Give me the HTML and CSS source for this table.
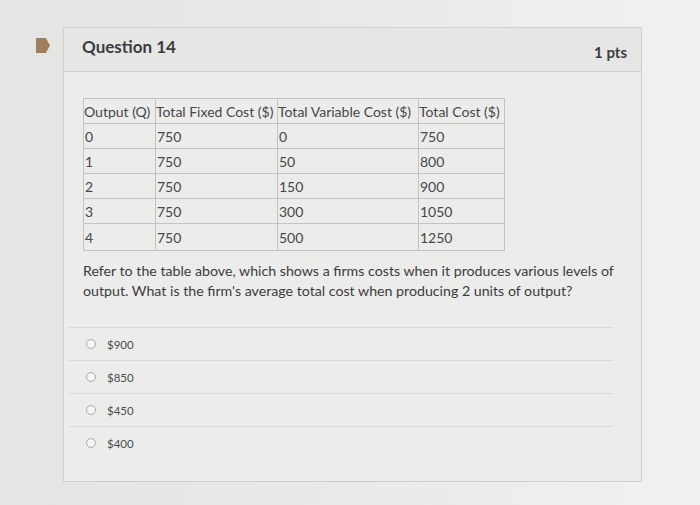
FILE: index.html
```html
<!DOCTYPE html>
<html>
<head>
<meta charset="utf-8">
<link rel="stylesheet" href="styles.css">
</head>
<body>
<div class="page">
  <div class="flag"></div>
  <div class="card">
    <div class="card-header">
      <h2 class="qtitle">Question 14</h2>
      <span class="pts">1 pts</span>
    </div>
    <div class="card-body">
      <table class="costs">
        <tr><th>Output (Q)</th><th>Total Fixed Cost ($)</th><th>Total Variable Cost ($)</th><th>Total Cost ($)</th></tr>
        <tr><td>0</td><td>750</td><td>0</td><td>750</td></tr>
        <tr><td>1</td><td>750</td><td>50</td><td>800</td></tr>
        <tr><td>2</td><td>750</td><td>150</td><td>900</td></tr>
        <tr><td>3</td><td>750</td><td>300</td><td>1050</td></tr>
        <tr class="last"><td>4</td><td>750</td><td>500</td><td>1250</td></tr>
      </table>
      <p class="prompt">Refer to the table above, which shows a firms costs when it produces various levels of output. What is the firm's average total cost when producing 2 units of output?</p>
      <div class="answers">
        <div class="answer"><span class="radio"></span><span class="label">$900</span></div>
        <div class="answer"><span class="radio"></span><span class="label">$850</span></div>
        <div class="answer"><span class="radio"></span><span class="label">$450</span></div>
        <div class="answer"><span class="radio"></span><span class="label">$400</span></div>
      </div>
    </div>
  </div>
</div>
</body>
</html>
```
FILE: styles.css
```css
html, body {
  margin: 0;
  padding: 0;
}
body {
  width: 700px;
  height: 505px;
  overflow: hidden;
  background: linear-gradient(90deg, #e4e4e2 0%, #ebebe9 60%, #f1f1ef 100%);
  font-family: Lato, "Liberation Sans", sans-serif;
  color: #3a3c40;
}
.page {
  display: flex;
  align-items: flex-start;
  padding: 27px 0 0 36px;
}
.flag {
  width: 14px;
  height: 15px;
  margin-top: 11px;
  margin-right: 13px;
  background: #9f7f5c;
  clip-path: polygon(0 0, 70% 0, 100% 50%, 70% 100%, 0 100%);
}
.card {
  width: 579px;
  height: 455px;
  border: 1px solid #cfcfcd;
  background: #ececea;
  box-sizing: border-box;
}
.card-header {
  height: 43px;
  display: flex;
  justify-content: space-between;
  align-items: center;
  padding: 0 14px 0 18px;
  background: #e6e6e4;
  border-bottom: 1px solid #cdcdcb;
}
.qtitle {
  margin: 0;
  font-size: 17px;
  font-weight: 700;
  color: #3b3d42;
  margin-top: -7px;
}
.pts {
  font-size: 15px;
  font-weight: 700;
  color: #3b3d42;
  margin-top: 4px;
}
.card-body {
  padding: 26px 20px 0 19px;
}
.costs {
  border-collapse: collapse;
  font-size: 14px;
  color: #45474b;
  border: 1px solid #c3c3c1;
}
.costs th, .costs td {
  border: 1px solid #c3c3c1;
  padding: 0 2px 0 1px;
  text-align: left;
  font-weight: 400;
  height: 24px;
  white-space: nowrap;
}
.costs th { padding-left: 0; }
.costs td:nth-child(1) { width: 68px; }
.costs td:nth-child(2) { width: 118px; }
.costs td:nth-child(3) { width: 137px; }
.costs td:nth-child(4) { width: 82px; }
.costs tr.last td { height: 26px; }
.prompt {
  margin: 10px 0 0 0;
  font-size: 14.2px;
  line-height: 20px;
  color: #3a3c40;
  width: 545px;
}
.answers {
  margin: 26px 8px 0 -15px;
}
.answer {
  height: 32px;
  border-top: 1px solid #dadad8;
  display: flex;
  align-items: center;
  padding-left: 18px;
  gap: 11px;
}
.radio {
  width: 8px;
  height: 8px;
  border: 1px solid #a9a9a7;
  border-radius: 50%;
  background: #f4f4f2;
}
.label {
  font-size: 11.5px;
  color: #4a4c50;
}
```
